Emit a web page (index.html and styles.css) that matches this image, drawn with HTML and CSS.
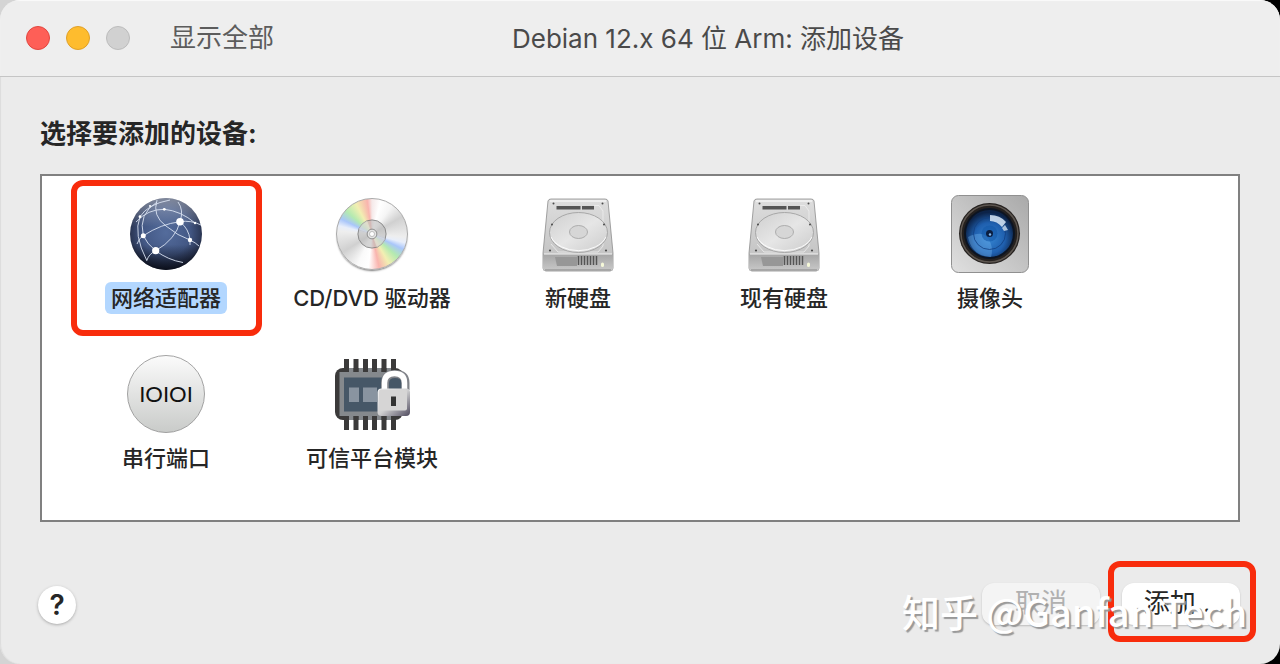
FILE: index.html
```html
<!DOCTYPE html>
<html lang="zh-CN">
<head>
    <meta charset="utf-8">
    <title>Debian 12.x 64 位 Arm: 添加设备</title>
    <link rel="stylesheet" href="styles.css">
</head>
<body>
<div class="window">
    <header class="titlebar">
        <div class="lights">
            <button class="light red" aria-label="关闭"></button>
            <button class="light yellow" aria-label="最小化"></button>
            <button class="light grey" aria-label="缩放" disabled></button>
        </div>
        <button class="showAll">显示全部</button>
        <div class="title">Debian 12.x 64 位 Arm: 添加设备</div>
    </header>
    <main class="content">
        <h1 class="heading">选择要添加的设备:</h1>
        <div class="deviceList">
            <button class="device selected marked">
                <svg class="icon" viewBox="0 0 80 80">
                    <defs>
                        <radialGradient id="globe" cx="50%" cy="48%" r="55%">
                            <stop offset="0" stop-color="#546c9c"/>
                            <stop offset="0.6" stop-color="#435885"/>
                            <stop offset="0.88" stop-color="#2c3857"/>
                            <stop offset="1" stop-color="#161c2c"/>
                        </radialGradient>
                        <linearGradient id="globeShade" x1="0" y1="0" x2="0" y2="1">
                            <stop offset="0" stop-color="#ffffff" stop-opacity="0.4"/>
                            <stop offset="0.4" stop-color="#ffffff" stop-opacity="0"/>
                            <stop offset="0.65" stop-color="#05070f" stop-opacity="0"/>
                            <stop offset="1" stop-color="#05070f" stop-opacity="0.8"/>
                        </linearGradient>
                    </defs>
                    <circle cx="40" cy="40" r="36" fill="url(#globe)"/>
                    <circle cx="40" cy="40" r="36" fill="url(#globeShade)"/>
                    <g fill="none" stroke="#d9e2f2" stroke-width="0.9">
                        <path d="M29.7 56.7Q50 45 54 27.7Q58 16 52 8"/>
                        <path d="M11 50Q13 44 17.3 41.7Q35 30 54 27.7Q65 26 75 31"/>
                        <path d="M17.3 41.7Q21 50 29.7 56.7Q42 66 57 68.5"/>
                        <path d="M31 6Q26 22 40 32Q52 42 64 46Q70 49 73 52"/>
                        <path d="M54 27.7Q63 35 64 46L64 51"/>
                        <path d="M10 28Q22 15 38.3 15.3Q55 17 69 29"/>
                        <path d="M14 22.7Q7 40 21 67"/>
                        <path d="M31 8Q12 20 17.3 41.7"/>
                        <path d="M14 22.7Q22 10 44 6"/>
                        <path d="M21 66Q23 60 29.7 56.7"/>
                    </g>
                    <g fill="#fff">
                        <circle cx="54" cy="27.7" r="3.8"/>
                        <circle cx="17.3" cy="41.7" r="2.5"/>
                        <circle cx="29.7" cy="56.7" r="3.6"/>
                        <circle cx="64" cy="46" r="2.2"/>
                        <circle cx="38.3" cy="15.3" r="1.4"/>
                        <circle cx="14" cy="22.7" r="1.4"/>
                        <circle cx="69" cy="29" r="1.2"/>
                        <circle cx="24" cy="12" r="1"/>
                    </g>
                </svg>
                <span class="name">网络适配器</span>
            </button>
            <button class="device">
                <span class="icon discIcon">
                    <span class="disc">
                        <svg viewBox="0 0 72 72">
                            <circle cx="36" cy="36" r="14.5" fill="#bbbbbb" fill-opacity="0.6" stroke="#777" stroke-width="0.8"/>
                            <path d="M36 36L22 31A15 15 0 0 1 31 22ZM36 36L50 41A15 15 0 0 1 41 50Z" fill="#fff" fill-opacity="0.3"/>
                            <circle cx="36" cy="36" r="5" fill="#e4e4e4" stroke="#777" stroke-width="0.8"/>
                            <circle cx="36" cy="36" r="2.6" fill="#fff" stroke="#999" stroke-width="0.6"/>
                        </svg>
                    </span>
                </span>
                <span class="name">CD/DVD 驱动器</span>
            </button>
            <button class="device">
                <svg class="icon" viewBox="0 0 80 80">
                    <defs>
                        <linearGradient id="diskTop" x1="0" y1="0" x2="0" y2="1">
                            <stop offset="0" stop-color="#dedede"/>
                            <stop offset="1" stop-color="#bdbdbd"/>
                        </linearGradient>
                        <linearGradient id="diskFront" x1="0" y1="0" x2="0" y2="1">
                            <stop offset="0" stop-color="#a5a5a5"/>
                            <stop offset="1" stop-color="#c9c9c9"/>
                        </linearGradient>
                        <linearGradient id="platter" x1="0" y1="0" x2="1" y2="1">
                            <stop offset="0" stop-color="#cfcfcf"/>
                            <stop offset="0.5" stop-color="#e6e6e6"/>
                            <stop offset="1" stop-color="#cbcbcb"/>
                        </linearGradient>
                    </defs>
                    <g id="hardDisk">
                        <path d="M13 5H67Q69.500 5 70 7L75 59V74Q75 77 72 77H8Q5 77 5 74V59L10 7Q10.500 5 13 5Z" fill="url(#diskTop)" stroke="#8d8d8d" stroke-width="0.8"/>
                        <path d="M5 60H75V74Q75 77 72 77H8Q5 77 5 74Z" fill="url(#diskFront)"/>
                        <path d="M6 60H74" stroke="#f4f4f4" stroke-width="1.2"/>
                        <path d="M12 7H68" stroke="#fff" stroke-width="1"/>
                        <path d="M18.500 12H42.500V15.500H18.500ZM44 12H56V15.500H44Z" fill="#555"/>
                        <path d="M56 11.500H61L65 17V52L60 58H20L13 50" fill="none" stroke="#efefef" stroke-width="0.8"/>
                        <ellipse cx="40.500" cy="38.500" rx="29" ry="20" fill="url(#platter)" stroke="#a2a2a2" stroke-width="0.9"/>
                        <path d="M13 43A29 20 0 0 0 68 43" fill="none" stroke="#fff" stroke-width="0.9"/>
                        <ellipse cx="40.500" cy="38" rx="9" ry="6.500" fill="#d6d6d6" stroke="#9f9f9f" stroke-width="0.8"/>
                        <g fill="#4a4a4a">
                            <circle cx="15.500" cy="9.500" r="1"/>
                            <circle cx="64.500" cy="9.500" r="1"/>
                            <circle cx="14" cy="30.500" r="1"/>
                            <circle cx="66" cy="30.500" r="1"/>
                            <circle cx="12" cy="56.500" r="1.100"/>
                            <circle cx="68" cy="56.500" r="1.100"/>
                        </g>
                        <path d="M17 63H39V72H19Z" fill="#979797"/>
                        <path d="M40.500 62V71M43.500 62V71M46.500 62V71M49.500 62V71M52.500 62V71M55.500 62V71M58.500 62V71" stroke="#555" stroke-width="1.500"/>
                        <rect x="63" y="68.500" width="3" height="4.500" rx="1.500" fill="#f5f8d8"/>
                        <path d="M7 76H73" stroke="#777" stroke-width="0.8"/>
                    </g>
                </svg>
                <span class="name">新硬盘</span>
            </button>
            <button class="device">
                <svg class="icon" viewBox="0 0 80 80"><use href="#hardDisk"/></svg>
                <span class="name">现有硬盘</span>
            </button>
            <button class="device">
                <svg class="icon" viewBox="0 0 80 80">
                    <defs>
                        <linearGradient id="cameraBox" x1="0" y1="1" x2="1" y2="0">
                            <stop offset="0" stop-color="#e0e0e0"/>
                            <stop offset="1" stop-color="#a9a9a9"/>
                        </linearGradient>
                        <radialGradient id="lens" cx="50%" cy="60%" r="55%">
                            <stop offset="0" stop-color="#3585d2"/>
                            <stop offset="0.6" stop-color="#1f5fae"/>
                            <stop offset="1" stop-color="#0c2348"/>
                        </radialGradient>
                    </defs>
                    <rect x="1.500" y="1.500" width="77" height="77" rx="7" fill="url(#cameraBox)" stroke="#909090"/>
                    <circle cx="39.500" cy="39.500" r="30.500" fill="#25211f"/>
                    <circle cx="39.500" cy="39.500" r="28.500" fill="none" stroke="#5d5650" stroke-width="1.500"/>
                    <circle cx="39.500" cy="39.500" r="25.500" fill="#0c1422"/>
                    <circle cx="39.500" cy="39.500" r="23.500" fill="url(#lens)"/>
                    <path d="M18 43Q32 36 38 44Q44 53 41 63Q22 62 18 43Z" fill="#7fc0f5" fill-opacity="0.35"/>
                    <circle cx="39.500" cy="39.500" r="16" fill="none" stroke="#123f80" stroke-width="0.8"/>
                    <circle cx="39.500" cy="39.500" r="8" fill="#1458a8" fill-opacity="0.6"/>
                    <circle cx="39.500" cy="39.500" r="3.500" fill="#0b1e40"/>
                    <circle cx="40" cy="40.500" r="1.200" fill="#7fb7ec"/>
                    <path d="M40 21Q50 21 56 28L52 33Q47 27 40 27Z" fill="#dbe9f7" fill-opacity="0.85"/>
                    <path d="M55 31L58 36L54 37L52 34Z" fill="#dbe9f7" fill-opacity="0.75"/>
                </svg>
                <span class="name">摄像头</span>
            </button>
            <button class="device">
                <svg class="icon" viewBox="0 0 80 80">
                    <defs>
                        <linearGradient id="port" x1="0" y1="0" x2="0" y2="1">
                            <stop offset="0" stop-color="#fbfbfb"/>
                            <stop offset="1" stop-color="#c9cbc9"/>
                        </linearGradient>
                    </defs>
                    <circle cx="40" cy="40" r="38.500" fill="url(#port)" stroke="#999" stroke-width="0.9"/>
                    <text class="portText" x="40" y="48" text-anchor="middle">IOIOI</text>
                </svg>
                <span class="name">串行端口</span>
            </button>
            <button class="device">
                <svg class="icon" viewBox="0 0 80 80">
                    <defs>
                        <linearGradient id="lock" x1="0" y1="0" x2="1" y2="1">
                            <stop offset="0" stop-color="#f3f3f3"/>
                            <stop offset="0.5" stop-color="#cfcfd0"/>
                            <stop offset="1" stop-color="#4f4a5e"/>
                        </linearGradient>
                    </defs>
                    <rect x="3" y="14" width="68" height="52" rx="8" fill="#3b3a3a"/>
                    <rect x="7.500" y="18" width="60" height="44" fill="#85898d"/>
                    <rect x="12" y="23.500" width="53" height="34" fill="#465767"/>
                    <path d="M17 33.500H27V48H17ZM31 33.500H45V48H31Z" fill="#8994a0"/>
                    <path d="M17 14H21.500V18H17ZM26.500 14H31V18H26.500ZM36 14H40.500V18H36ZM45 14H49.500V18H45ZM54.500 14H59V18H54.500ZM17 62H21.500V66H17ZM26.500 62H31V66H26.500ZM36 62H40.500V66H36ZM45 62H49.500V66H45ZM54.500 62H59V66H54.500Z" fill="#85898d"/>
                    <path d="M14.500 5V18M24 5V18M33.500 5V18M42.500 5V18M52 5V18M61.500 5V18M14.500 62V76M24 62V76M33.500 62V76M42.500 62V76M52 62V76M61.500 62V76" stroke="#3b3a3a" stroke-width="5"/>
                    <path d="M53 36V29Q53 20 63 20Q73.500 20 73.500 29V36" fill="#465767" stroke="#808389" stroke-width="8"/>
                    <path d="M52.500 36V29Q52.500 19.500 62.500 19.500Q72.500 19.500 72.500 29V36" fill="none" stroke="#fff" stroke-width="5.500"/>
                    <rect x="45.500" y="34.500" width="32.500" height="27.500" rx="4" fill="url(#lock)"/>
                    <rect x="47" y="35.500" width="28" height="21" rx="2" fill="#d6d5d5"/>
                    <rect x="59" y="42.500" width="5" height="9.500" fill="#333"/>
                </svg>
                <span class="name">可信平台模块</span>
            </button>
        </div>
        <footer class="footer">
            <button class="help" aria-label="帮助">?</button>
            <div class="actions">
                <button class="action" disabled>取消</button>
                <button class="action marked">添加...</button>
            </div>
        </footer>
    </main>
    <div class="watermark">知乎 @Ganfan Tech</div>
</div>
</body>
</html>
```
FILE: styles.css
```css
*{
    box-sizing: border-box;
}
body{
    margin: 0;
    background: linear-gradient(90deg, #d4d4d4 50%, #000 50%);
    font-family: Inter, "Noto Sans CJK SC", sans-serif;
    color: #262626;
}
button{
    padding: 0;
    border: 0;
    background: none;
    font: inherit;
    color: inherit;
}
.window{
    position: relative;
    display: flex;
    flex-direction: column;
    min-height: 100vh;
    border-radius: 20px;
    background: #ebebeb;
    box-shadow: inset 1px 0 1px #dcdcdc;
    overflow: hidden;
}
.titlebar{
    display: flex;
    align-items: center;
    height: 77px;
    padding: 0 26px;
    border-bottom: 1px solid #c5c5c5;
    background: #eee;
    box-shadow: inset 0 1px 1px #fafafa;
}
.lights{
    display: flex;
    gap: 16px;
}
.light{
    width: 24px;
    height: 24px;
    border-radius: 50%;
}
.red{
    border: 1px solid #e2463f;
    background: #fe5f57;
}
.yellow{
    border: 1px solid #e0a028;
    background: #febc2e;
}
.grey{
    border: 1px solid #bcbcbc;
    background: #d1d1d1;
}
.showAll{
    margin-left: 40px;
    font-size: 26px;
    line-height: 36px;
    color: #5c5c5c;
}
.title{
    flex: 1;
    padding: 2px 112px 0 0;
    text-align: center;
    font-size: 26px;
    line-height: 36px;
    color: #4a4a4a;
}
.content{
    flex: 1;
    display: flex;
    flex-direction: column;
    padding: 37px 40px 39px;
}
.heading{
    margin: 0 0 20px;
    font-size: 26px;
    line-height: 40px;
    font-weight: 700;
}
.deviceList{
    flex: 1;
    display: grid;
    grid-template-columns: repeat(auto-fill, 206px);
    grid-auto-rows: 160px;
    padding: 0 21px;
    border: 2px solid #808080;
    background: #fff;
}
.device{
    position: relative;
    display: flex;
    flex-direction: column;
    align-items: center;
    gap: 8px;
    padding-top: 18px;
}
.icon{
    width: 80px;
    height: 80px;
}
.name{
    padding: 0 6px;
    border-radius: 6px;
    font-size: 22px;
    line-height: 32px;
    white-space: nowrap;
}
.name:lang(zh){
    font-family: Inter, "Noto Sans CJK SC", sans-serif;
    font-weight: 500;
}
.selected .name{
    background: #b3d7ff;
}
.discIcon{
    padding: 4px;
}
.disc{
    display: block;
    height: 72px;
    border: 1px solid #aaa;
    border-radius: 50%;
    background: conic-gradient(#f5e9e9, #fff 15deg, #f5f5f5 35deg, #d0d0d0 60deg, #eee 95deg, #e8eefa 105deg, #a9c6fa 116deg, #b4eab0 132deg, #f2efb2 150deg, #f9b4ae 168deg, #fff 186deg, #fafafa 205deg, #d0d0d0 238deg, #eee 275deg, #e8eefa 284deg, #a9c6fa 296deg, #b4eab0 312deg, #f2efb2 332deg, #f9b4ae 352deg, #f5e9e9);
    box-shadow: 0 2px 2px -1px #777;
}
.disc svg{
    display: block;
}
.portText{
    font-family: Lato, sans-serif;
    font-size: 22px;
    fill: #111;
}
.footer{
    display: flex;
    justify-content: space-between;
    align-items: center;
    margin-top: 61px;
}
.help{
    width: 38px;
    height: 38px;
    margin: 2px 0 0 -2px;
    border-radius: 50%;
    background: #fff;
    box-shadow: 0 1px 3px #aaa;
    font-size: 28px;
    font-weight: 600;
    line-height: 38px;
}
.actions{
    display: flex;
    gap: 22px;
}
.action{
    position: relative;
    width: 118px;
    height: 42px;
    padding-bottom: 2px;
    border-radius: 12px;
    background: #fff;
    box-shadow: 0 1px 2px #bbb;
    font-size: 26px;
    line-height: 40px;
}
.action:disabled{
    background: #f4f4f4;
    color: #b0b0b0;
}
/* red frames round the two things to click */
.marked::after{
    content: "";
    position: absolute;
    border: 6px solid #f82c0c;
    border-radius: 12px;
}
.device.marked::after{
    top: 4px;
    right: 7px;
    bottom: 0;
    left: 8px;
}
.action.marked::after{
    top: -22px;
    right: -16px;
    bottom: -17px;
    left: -14px;
}
.watermark{
    position: absolute;
    right: 33px;
    bottom: 25px;
    font-family: "Noto Sans CJK SC", sans-serif;
    font-size: 38px;
    font-weight: 500;
    line-height: 56px;
    color: #fff;
    text-shadow: 2px 2px 1px #999;
    pointer-events: none;
}
```
